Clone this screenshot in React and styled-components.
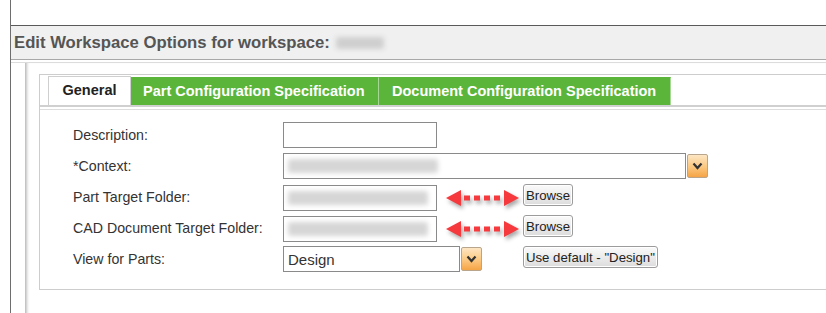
import React from 'react';
import styled, { createGlobalStyle } from 'styled-components';

const Global = createGlobalStyle`
  html, body { margin: 0; padding: 0; background: #fff; }
  body { font-family: Arial, "Liberation Sans", sans-serif; overflow: hidden; }
`;

const Frame = styled.div`
  margin-left: 10px;
  border-left: 1px solid #6e6e6e;
  height: 313px;
  padding-top: 25px;
  box-sizing: border-box;
`;

const Dialog = styled.div`
  border-top: 1px solid #5a5a5a;
`;

const Header = styled.div`
  height: 33px;
  background: #f0f0f0;
  border-bottom: 1px solid #a8a8a8;
  display: flex;
  align-items: center;
  padding-left: 3px;
  font-size: 16.7px;
  font-weight: bold;
  color: #555;
  gap: 6px;
`;

const Blur = styled.span`
  display: inline-block;
  width: ${p => p.w}px;
  height: ${p => p.h || 14}px;
  background: ${p => p.c || '#d6d6d6'};
  filter: blur(2.5px);
  border-radius: 3px;
`;

const Rule = styled.div`
  margin-top: 2px;
  border-top: 1px solid #dcdcdc;
`;

const Panel = styled.div`
  margin-left: 14px;
  border-left: 1px solid #c4c4c4;
  box-shadow: inset 3px 0 3px -2px rgba(0, 0, 0, 0.25);
  padding: 11px 0 0 13px;
  height: 241px;
`;

const TabBox = styled.div`
  border: 1px solid #cdcdcd;
  border-right: none;
  padding-top: 1px;
`;

const TabBar = styled.div`
  display: flex;
  align-items: flex-end;
  padding-left: 8px;
  border-bottom: 2px solid #d0d0d0;
`;

const Tab = styled.div`
  height: ${p => (p.active ? 29 : 28)}px;
  box-sizing: border-box;
  padding: 0 ${p => p.pad || 11}px 2px;
  display: flex;
  align-items: center;
  font-size: 14.5px;
  font-weight: bold;
  white-space: nowrap;
  color: ${p => (p.active ? '#222' : '#fff')};
  background: ${p => (p.active ? '#fff' : '#5cb53b')};
  border: 1px solid ${p => (p.active ? '#cfcfcf' : '#5cb53b')};
  border-bottom: none;
  border-right: 1px solid ${p => (p.active ? '#cfcfcf' : '#a7d794')};
  width: ${p => p.w}px;
  justify-content: ${p => (p.active ? 'center' : 'flex-start')};
`;

const Form = styled.div`
  margin-top: 2px;
  border-top: 1px solid #dddddd;
  padding: 12px 0 17px 33px;
  display: flex;
  flex-direction: column;
  gap: 5px;
`;

const Row = styled.div`
  display: grid;
  grid-template-columns: 210px 240px auto;
  align-items: start;
  height: 26px;
`;

const Label = styled.div`
  font-size: 14.2px;
  color: #333;
  line-height: 26px;
`;

const FieldCell = styled.div`
  display: flex;
  align-items: center;
  grid-column: ${p => (p.wide ? 'span 2' : 'auto')};
`;

const Input = styled.div`
  width: ${p => p.w}px;
  height: 26px;
  box-sizing: border-box;
  border: 1px solid #8a8a8a;
  display: flex;
  align-items: center;
  padding-left: 4px;
  font-size: 15px;
  color: #333;
  overflow: hidden;
`;

const DropButton = styled.div`
  width: 21px;
  height: 24px;
  box-sizing: border-box;
  margin-left: 1px;
  border: 1px solid #b9a58c;
  border-radius: 2px;
  background: linear-gradient(#fde6c4, #fbc77f 55%, #f5a445);
  display: flex;
  align-items: center;
  justify-content: center;
`;

const ArrowWrap = styled.div`
  margin-left: 9px;
  height: 26px;
  display: flex;
  align-items: center;
  margin-top: ${p => p.dy || 0}px;
  filter: drop-shadow(2px 3px 2px rgba(0, 0, 0, 0.35));
`;

const Button = styled.div`
  height: 22px;
  box-sizing: border-box;
  padding: 0 2px;
  border: 1px solid #9c9c9c;
  border-radius: 3px;
  background: linear-gradient(#fafafa, #ececec 50%, #dcdcdc);
  box-shadow: inset 0 0 0 1px #fff;
  font-family: "Liberation Sans", Arial, sans-serif;
  font-size: 13.2px;
  color: #222;
  display: inline-flex;
  align-items: center;
  justify-self: start;
  white-space: nowrap;
`;

const Chevron = () => (
  <svg width="11" height="8" viewBox="0 0 11 8">
    <polyline points="1.5,1.5 5.5,6 9.5,1.5" fill="none" stroke="#333" strokeWidth="2.2" />
  </svg>
);

const DoubleArrow = () => (
  <svg width="74" height="18" viewBox="0 0 74 18">
    <g fill="#f5393c">
      <polygon points="0,9 15,1 15,17" />
      <rect x="18" y="6.5" width="6" height="5" />
      <rect x="28" y="6.5" width="6" height="5" />
      <rect x="38" y="6.5" width="6" height="5" />
      <rect x="48" y="6.5" width="6" height="5" />
      <polygon points="58,1 73,9 58,17" />
    </g>
  </svg>
);

const App = () => (
  <>
    <Global />
    <Frame>
      <Dialog>
        <Header>
          Edit Workspace Options for workspace:
          <Blur w={48} h={12} c="#cfcfcf" />
        </Header>
        <Rule />
        <Panel>
          <TabBox>
            <TabBar>
              <Tab active w={83}>General</Tab>
              <Tab w={248}>Part Configuration Specification</Tab>
              <Tab w={292} pad={12}>Document Configuration Specification</Tab>
            </TabBar>
            <Form>
              <Row>
                <Label>Description:</Label>
                <FieldCell>
                  <Input w={154} />
                </FieldCell>
              </Row>
              <Row>
                <Label>*Context:</Label>
                <FieldCell wide>
                  <Input w={403}>
                    <Blur w={150} h={14} />
                  </Input>
                  <DropButton><Chevron /></DropButton>
                </FieldCell>
              </Row>
              <Row>
                <Label>Part Target Folder:</Label>
                <FieldCell>
                  <Input w={154}>
                    <Blur w={140} h={14} />
                  </Input>
                  <ArrowWrap dy={1}><DoubleArrow /></ArrowWrap>
                </FieldCell>
                <Button>Browse</Button>
              </Row>
              <Row>
                <Label>CAD Document Target Folder:</Label>
                <FieldCell>
                  <Input w={154}>
                    <Blur w={140} h={14} />
                  </Input>
                  <ArrowWrap dy={1}><DoubleArrow /></ArrowWrap>
                </FieldCell>
                <Button>Browse</Button>
              </Row>
              <Row>
                <Label>View for Parts:</Label>
                <FieldCell>
                  <Input w={177}>Design</Input>
                  <DropButton><Chevron /></DropButton>
                </FieldCell>
                <Button>Use default - "Design"</Button>
              </Row>
            </Form>
          </TabBox>
        </Panel>
      </Dialog>
    </Frame>
  </>
);

export default App;
